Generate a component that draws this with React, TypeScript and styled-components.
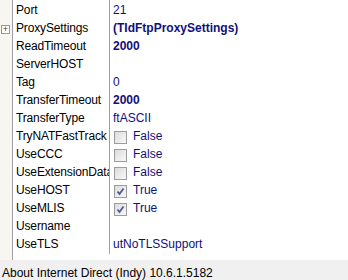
import styled, { createGlobalStyle } from "styled-components";

const GlobalStyle = createGlobalStyle`
  html, body {
    margin: 0;
    padding: 0;
    background: #ffffff;
  }
  body {
    font-family: "Liberation Sans", Arial, sans-serif;
    font-size: 12px;
  }
`;

type Prop = {
  name: string;
  value?: string;
  bold?: boolean;
  check?: boolean;
  expand?: boolean;
};

const props: Prop[] = [
  { name: "Port", value: "21" },
  { name: "ProxySettings", value: "(TIdFtpProxySettings)", bold: true, expand: true },
  { name: "ReadTimeout", value: "2000", bold: true },
  { name: "ServerHOST" },
  { name: "Tag", value: "0" },
  { name: "TransferTimeout", value: "2000", bold: true },
  { name: "TransferType", value: "ftASCII" },
  { name: "TryNATFastTrack", value: "False", check: false },
  { name: "UseCCC", value: "False", check: false },
  { name: "UseExtensionDataL", value: "False", check: false },
  { name: "UseHOST", value: "True", check: true },
  { name: "UseMLIS", value: "True", check: true },
  { name: "Username" },
  { name: "UseTLS", value: "utNoTLSSupport" },
];

const App = () => {
  return (
    <Page>
      <GlobalStyle />
      <Inspector>
        {props.map((p) => (
          <Row key={p.name}>
            <Gutter>{p.expand && <PlusBox>+</PlusBox>}</Gutter>
            <Name>{p.name}</Name>
            <Value $bold={p.bold}>
              {p.check !== undefined && (
                <CheckBox>
                  {p.check && (
                    <svg width="9" height="9" viewBox="0 0 9 9">
                      <path d="M1.5 4.5 L3.5 7 L7.5 1.5" fill="none" stroke="#4a5d9a" strokeWidth="1.8" />
                    </svg>
                  )}
                </CheckBox>
              )}
              {p.value}
            </Value>
          </Row>
        ))}
        <Tail>
          <Gutter />
        </Tail>
      </Inspector>
      <StatusBar>About Internet Direct (Indy) 10.6.1.5182</StatusBar>
    </Page>
  );
};

export default App;

const Page = styled.div`
  width: 348px;
  height: 280px;
  display: flex;
  flex-direction: column;
  overflow: hidden;
`;

const Inspector = styled.div`
  height: 267px;
  display: flex;
  flex-direction: column;
`;

const Row = styled.div`
  display: grid;
  grid-template-columns: 13px 97px 1fr;
  height: 18px;
  line-height: 20px;
`;

const Gutter = styled.div`
  background: #f8f6f0;
  border-right: 1px solid #a0a0a0;
  display: flex;
  align-items: center;
  justify-content: center;
`;

const PlusBox = styled.span`
  width: 7px;
  height: 7px;
  border: 1px solid #9a9a9a;
  background: #ffffff;
  color: #404040;
  font-size: 9px;
  line-height: 7px;
  text-align: center;
  margin: 2px 1px 0 0;
`;

const Name = styled.div`
  padding-left: 3px;
  color: #000000;
  letter-spacing: -0.15px;
  white-space: nowrap;
  overflow: hidden;
  border-right: 1px solid #a0a0a0;
`;

const Value = styled.div<{ $bold?: boolean }>`
  display: flex;
  align-items: center;
  gap: 6px;
  padding-left: 3px;
  color: #10107a;
  font-weight: ${({ $bold }) => ($bold ? 700 : 400)};
  white-space: nowrap;
`;

const CheckBox = styled.span`
  width: 11px;
  height: 11px;
  margin: 2px 0 0 1px;
  border: 1px solid #9c9c9c;
  background: linear-gradient(135deg, #dcdcdc, #f8f8f8);
  display: flex;
  align-items: center;
  justify-content: center;
`;

const Tail = styled.div`
  flex: 1;
  display: grid;
  grid-template-columns: 13px 1fr;
`;

const StatusBar = styled.div`
  flex: 1;
  background: #f0f0f0;
  color: #000000;
  padding: 6px 0 0 2px;
  white-space: nowrap;
  line-height: 14px;
`;
